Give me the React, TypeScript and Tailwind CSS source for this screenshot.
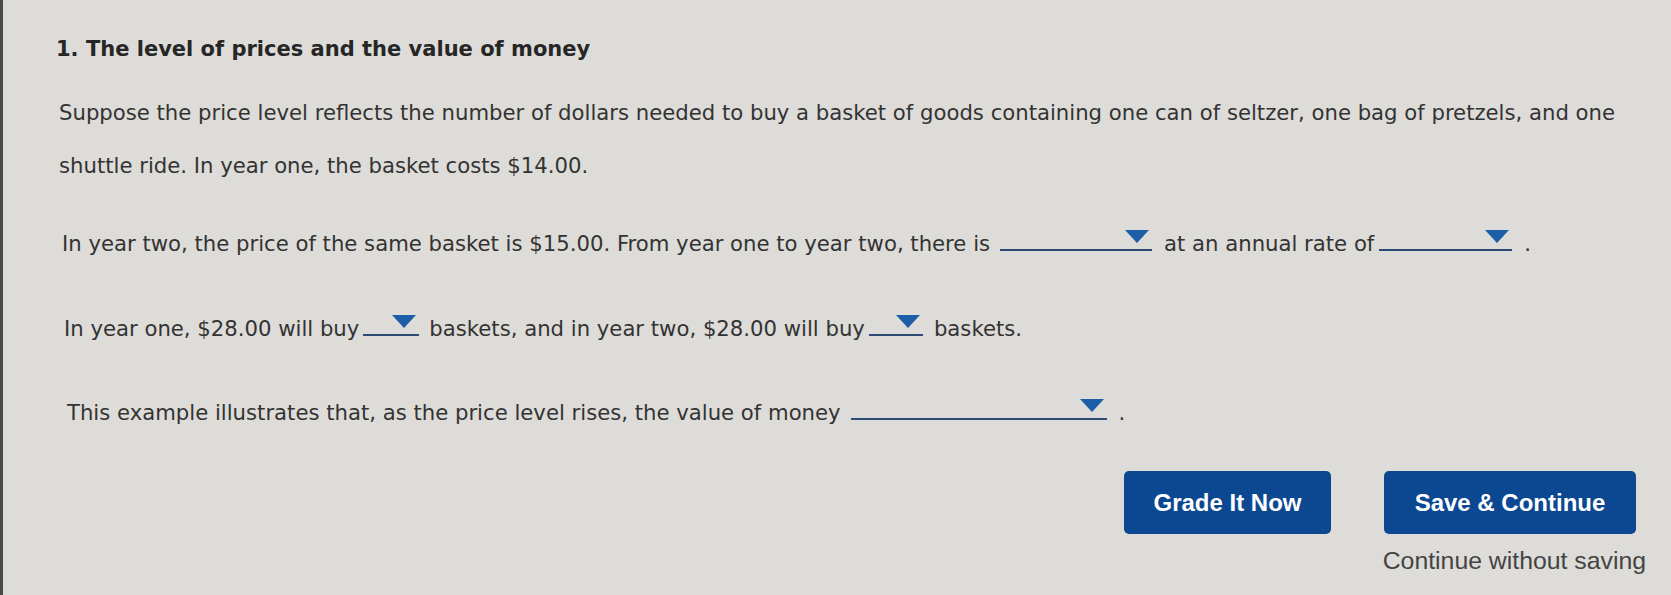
import React from "react";

// Blank answer slot with the little blue caret on the right
function Dropdown({ width, gap = "mx-[10px]" }: { width: string; gap?: string }) {
  return (
    <span className={`relative inline-block align-baseline ${width} h-[22px] border-b-[2.5px] border-[#2d4b75] ${gap}`}>
      <svg
        className="absolute right-[3px] top-[1px]"
        width="24"
        height="14"
        viewBox="0 0 24 14"
      >
        <polygon points="0,0 24,0 12,13" fill="#1d5ea8" />
      </svg>
    </span>
  );
}

export default function App() {
  return (
    <div className="w-[1671px] h-[595px] overflow-hidden bg-[#dedcd8] border-l-[3px] border-[#4a4a48] font-['DejaVu_Sans',Verdana,sans-serif] text-[#333]">
      <div className="pl-[53px] pt-[35px]">
        <h1 className="text-[21px] leading-[28px] font-bold text-[#262626]">
          1. The level of prices and the value of money
        </h1>

        <p className="mt-[23px] ml-[3px] text-[21.2px] leading-[53px] w-[1585px]">
          Suppose the price level reflects the number of dollars needed to buy a basket of goods containing one can of
          seltzer, one bag of pretzels, and one shuttle ride. In year one, the basket costs $14.00.
        </p>

        <p className="mt-[37px] ml-[6px] text-[21.2px] leading-[28px]">
          In year two, the price of the same basket is $15.00. From year one to year two, there is
          <Dropdown width="w-[152px]" gap="ml-[10px] mr-[12px]" />
          at an annual rate of
          <Dropdown width="w-[133px]" gap="ml-[5px] mr-[12px]" />
          .
        </p>

        <p className="mt-[56px] ml-[8px] text-[21.2px] leading-[28px]">
          In year one, $28.00 will buy
          <Dropdown width="w-[56px]" gap="ml-[4px] mr-[10px]" />
          baskets, and in year two, $28.00 will buy
          <Dropdown width="w-[54px]" gap="ml-[4px] mr-[11px]" />
          baskets.
        </p>

        <p className="mt-[55px] ml-[11px] text-[21.2px] leading-[28px]">
          This example illustrates that, as the price level rises, the value of money
          <Dropdown width="w-[256px]" gap="ml-[10px] mr-[12px]" />
          .
        </p>
      </div>

      <div className="mt-[44px] pr-[35px] flex flex-col items-end font-['Liberation_Sans',Arial,sans-serif]">
        <div className="flex gap-[53px]">
          <button className="w-[207px] h-[63px] rounded-[5px] bg-[#0c4891] text-white text-[24px] font-bold">
            Grade It Now
          </button>
          <button className="w-[252px] h-[63px] rounded-[5px] bg-[#0c4891] text-white text-[24px] font-bold">
            Save &amp; Continue
          </button>
        </div>
        <div className="mt-[12px] mr-[-10px] text-[24.8px] leading-[30px] text-[#444]">Continue without saving</div>
      </div>
    </div>
  );
}
